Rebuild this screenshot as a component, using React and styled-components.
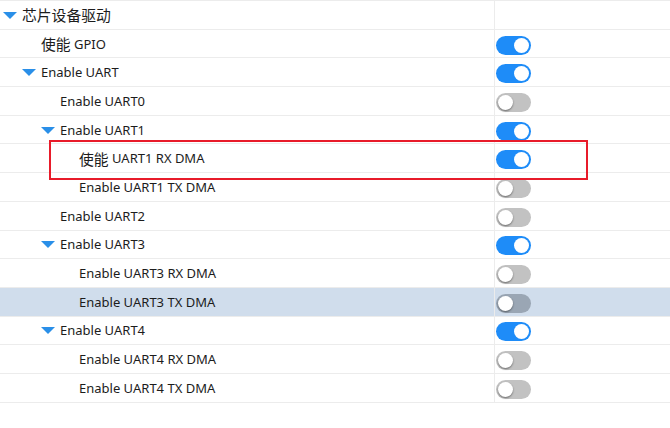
import styled, { createGlobalStyle } from 'styled-components';

const rows = [
  { han: '芯片设备驱动', label: '', level: 0, expand: true },
  { han: '使能', label: ' GPIO', level: 1, on: true },
  { label: 'Enable UART', level: 1, expand: true, on: true },
  { label: 'Enable UART0', level: 2, on: false },
  { label: 'Enable UART1', level: 2, expand: true, on: true },
  { han: '使能', label: ' UART1 RX DMA', level: 3, on: true },
  { label: 'Enable UART1 TX DMA', level: 3, on: false },
  { label: 'Enable UART2', level: 2, on: false },
  { label: 'Enable UART3', level: 2, expand: true, on: true },
  { label: 'Enable UART3 RX DMA', level: 3, on: false },
  { label: 'Enable UART3 TX DMA', level: 3, on: false, selected: true },
  { label: 'Enable UART4', level: 2, expand: true, on: true },
  { label: 'Enable UART4 RX DMA', level: 3, on: false },
  { label: 'Enable UART4 TX DMA', level: 3, on: false },
];

export default function App() {
  return (
    <>
      <GlobalStyle />
      <Tree>
        {rows.map((r, i) => (
          <Row key={i} $selected={r.selected}>
            <NameCell $level={r.level}>
              <Caret>{r.expand && <Triangle />}</Caret>
              {r.han && <Han>{r.han}</Han>}
              {r.label}
            </NameCell>
            <ValueCell>
              {r.on !== undefined && (
                <Switch $on={r.on} $selected={r.selected}>
                  <Knob $on={r.on} />
                </Switch>
              )}
            </ValueCell>
          </Row>
        ))}
        <Highlight />
      </Tree>
    </>
  );
}

const GlobalStyle = createGlobalStyle`
  body {
    margin: 0;
    background: #fff;
    font-family: "Noto Sans", "Noto Sans CJK SC", sans-serif;
    font-size: 13px;
    color: #1c1c1c;
  }
`;

export const Tree = styled.div`
  position: relative;
  width: 670px;
  border-top: 1px solid #ececec;
`;

export const Row = styled.div`
  display: grid;
  grid-template-columns: 495px 1fr;
  height: 28.7px;
  box-sizing: border-box;
  border-bottom: 1px solid #ececec;
  background: ${p => (p.$selected ? '#d0ddec' : 'transparent')};
`;

export const NameCell = styled.div`
  display: flex;
  align-items: center;
  padding-left: ${p => 3 + p.$level * 19}px;
  border-right: 1px solid #ececec;
  white-space: pre;
`;

export const Han = styled.span`
  font-family: "Noto Sans CJK SC", sans-serif;
  font-size: 14.8px;
`;

export const Caret = styled.span`
  width: 19px;
  flex: none;
  display: flex;
  align-items: center;
`;

export const Triangle = styled.span`
  width: 0;
  height: 0;
  border-left: 7px solid transparent;
  border-right: 7px solid transparent;
  border-top: 7px solid #2a8fe8;
  margin-top: 1px;
`;

export const ValueCell = styled.div`
  display: flex;
  align-items: center;
  padding: 3px 0 0 1px;
`;

export const Switch = styled.span`
  position: relative;
  width: 35px;
  height: 19px;
  border-radius: 10px;
  background: ${p => (p.$on ? '#1e8cf8' : p.$selected ? '#9aa6b4' : '#c2c2c2')};
`;

export const Knob = styled.span`
  position: absolute;
  top: 2px;
  left: ${p => (p.$on ? '18px' : '2px')};
  width: 15px;
  height: 15px;
  border-radius: 50%;
  background: #fff;
  box-shadow: ${p => (p.$on ? 'none' : '0 1px 2px rgba(0,0,0,0.45)')};
`;

export const Highlight = styled.div`
  position: absolute;
  left: 49px;
  top: 139px;
  width: 539px;
  height: 40px;
  box-sizing: border-box;
  border: 2px solid #e81b2a;
  pointer-events: none;
`;
